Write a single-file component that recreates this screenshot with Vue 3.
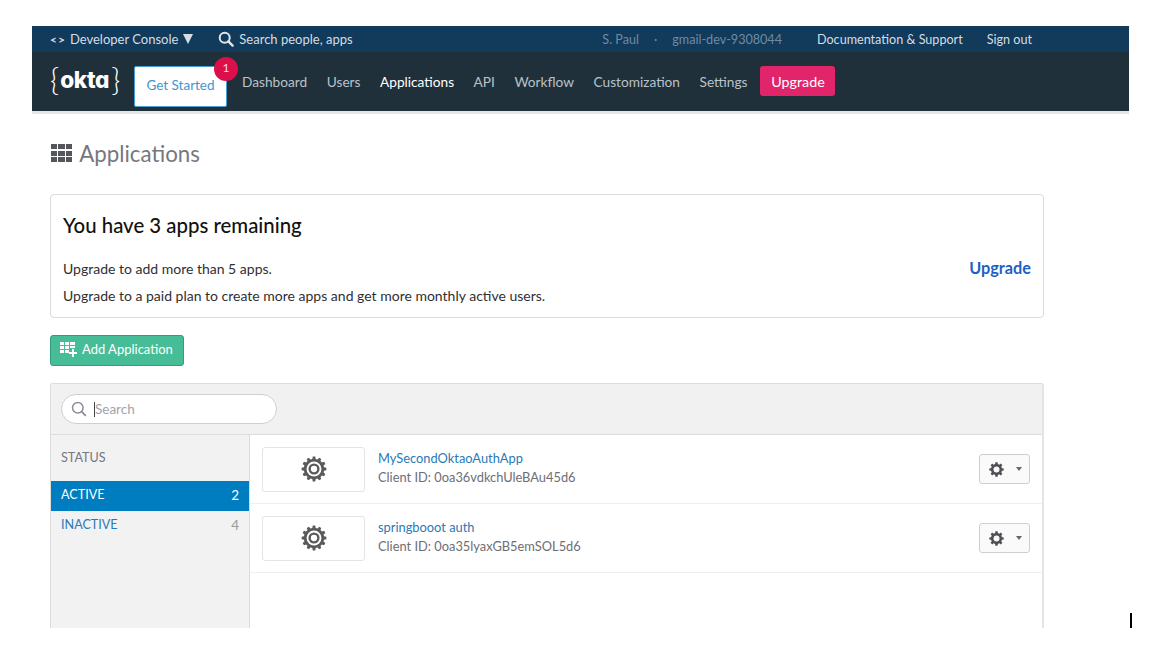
<template>
  <div class="screen">
    <div class="shot">
      <div class="topbar">
        <div class="top-left">
          <span class="code-mark">&lt;&gt;</span>
          <span>Developer Console</span>
          <span class="down-tri"></span>
          <svg class="top-search" viewBox="0 0 16 16" width="16" height="16">
            <circle cx="6.7" cy="6.7" r="5" fill="none" stroke="#dfe7ec" stroke-width="2" />
            <path d="M10.4 10.4 L14.6 14.6" stroke="#dfe7ec" stroke-width="2.4" stroke-linecap="round" />
          </svg>
          <span>Search people, apps</span>
        </div>
        <div class="top-right">
          <span class="dim">S. Paul</span>
          <span class="dim dot">·</span>
          <span class="dim org">gmail-dev-9308044</span>
          <span class="doc">Documentation &amp; Support</span>
          <span>Sign out</span>
        </div>
      </div>

      <div class="navbar">
        <div class="logo"><span class="brace">{</span><span class="okta">okta</span><span class="brace">}</span></div>
        <div class="started">
          Get Started
          <span class="badge">1</span>
        </div>
        <nav class="links">
          <a v-for="link in links" :key="link" :class="{ current: link === 'Applications' }">{{ link }}</a>
        </nav>
        <button class="upgrade-btn">Upgrade</button>
      </div>
      <div class="nav-rule"></div>

      <main class="content">
        <h1 class="title">
          <span class="grid-icon"><i v-for="n in 9" :key="n"></i></span>
          Applications
        </h1>

        <section class="notice">
          <h2>You have 3 apps remaining</h2>
          <div class="notice-row">
            <p>Upgrade to add more than 5 apps.</p>
            <a class="notice-link">Upgrade</a>
          </div>
          <p>Upgrade to a paid plan to create more apps and get more monthly active users.</p>
        </section>

        <button class="add-btn">
          <svg viewBox="0 0 17 16" width="17" height="16">
            <path fill="#fff" d="M0 1h4v3H0zM5 1h4v3H5zM10 1h5v3h-5zM0 5h4v3H0zM5 5h4v3H5zM10 5h5v2h-5zM0 9h4v3H0zM5 9h4v3H5z" />
            <path fill="#fff" d="M12 8h2v3h3v2h-3v3h-2v-3H9v-2h3z" />
          </svg>
          Add Application
        </button>

        <section class="panel">
          <div class="panel-search">
            <div class="search-box">
              <svg viewBox="0 0 16 16" width="16" height="16">
                <circle cx="6.8" cy="6.8" r="5.3" fill="none" stroke="#8c8c96" stroke-width="1.5" />
                <path d="M10.7 10.7 L14.8 14.8" stroke="#8c8c96" stroke-width="1.8" />
              </svg>
              <span class="caret"></span>
              <span class="placeholder">Search</span>
            </div>
          </div>
          <div class="panel-body">
            <aside class="side">
              <div class="side-head">STATUS</div>
              <div class="side-item active"><span>ACTIVE</span><span class="num">2</span></div>
              <div class="side-item"><span>INACTIVE</span><span class="num count">4</span></div>
            </aside>
            <div class="apps">
              <div v-for="app in apps" :key="app.name" class="app-row">
                <div class="app-logo">
                  <svg viewBox="0 0 28 28" width="26" height="26">
                    <path :d="bigGear" fill="#5a5a5a" />
                    <circle cx="14" cy="14" r="8" fill="#fff" />
                    <circle cx="14" cy="14" r="4.7" fill="none" stroke="#5a5a5a" stroke-width="2.6" />
                  </svg>
                </div>
                <div class="app-text">
                  <a>{{ app.name }}</a>
                  <div class="client">Client ID: {{ app.id }}</div>
                </div>
                <button class="gear-btn">
                  <svg viewBox="0 0 16 16" width="15" height="15">
                    <path :d="smallGear" fill="#4f4f55" fill-rule="evenodd" />
                  </svg>
                  <span class="caret-down"></span>
                </button>
              </div>
            </div>
          </div>
        </section>
      </main>
    </div>
    <span class="text-cursor"></span>
  </div>
</template>

<script setup>
const links = ['Dashboard', 'Users', 'Applications', 'API', 'Workflow', 'Customization', 'Settings']

const apps = [
  { name: 'MySecondOktaoAuthApp', id: '0oa36vdkchUleBAu45d6' },
  { name: 'springbooot auth', id: '0oa35lyaxGB5emSOL5d6' },
]

// toothed outline, optional hole is cut by the even-odd fill
function gear(c, outer, root, hole, teeth) {
  const step = (Math.PI * 2) / teeth
  const pts = []
  for (let i = 0; i < teeth; i++) {
    const a = i * step
    const w = step * 0.24
    ;[[a - w * 1.3, root], [a - w * 0.8, outer], [a + w * 0.8, outer], [a + w * 1.3, root]].forEach(([t, r]) => {
      pts.push(`${(c + r * Math.cos(t)).toFixed(2)} ${(c + r * Math.sin(t)).toFixed(2)}`)
    })
  }
  const ring = hole ? `M${c - hole} ${c}a${hole} ${hole} 0 1 0 ${hole * 2} 0a${hole} ${hole} 0 1 0 ${-hole * 2} 0z` : ''
  return `M${pts.join('L')}z${ring}`
}

const bigGear = gear(14, 13.4, 11, 0, 12)
const smallGear = gear(8, 7.8, 6, 3.2, 8)
</script>

<style>
body {
  background: #fff;
}
</style>

<style scoped>
.screen {
  position: relative;
  width: 1168px;
  height: 660px;
  padding: 26px 39px 0 32px;
  box-sizing: border-box;
  background: #fff;
  font-family: Lato, "Open Sans", Arial, sans-serif;
}

.shot {
  height: 602px;
  overflow: hidden;
}

.topbar {
  display: flex;
  justify-content: space-between;
  align-items: center;
  height: 26px;
  padding: 0 97px 0 18px;
  background: #123a5b;
  color: #d5dde3;
  font-size: 13px;
}

.top-left,
.top-right {
  display: flex;
  align-items: center;
}

.top-right {
  font-size: 12.6px;
}

.code-mark {
  margin-right: 4px;
  font-weight: 700;
  letter-spacing: 1px;
  font-size: 12px;
}

.down-tri {
  width: 0;
  height: 0;
  margin: 0 25px 0 5px;
  border-left: 5px solid transparent;
  border-right: 5px solid transparent;
  border-top: 10px solid #d5dde3;
}

.top-search {
  margin-right: 5px;
}

.dim {
  color: #6f8ba1;
}

.dot {
  margin: 0 15px;
}

.org {
  margin-right: 35px;
}

.doc {
  margin-right: 24px;
}

.navbar {
  display: flex;
  align-items: center;
  height: 59px;
  padding-left: 18px;
  background: #1f303b;
}

.logo {
  display: flex;
  align-items: center;
  width: 84px;
  color: #fff;
  margin-top: -4px;
}

.brace {
  font-size: 31px;
  font-weight: 300;
  line-height: 1;
}

.okta {
  margin: 0 2px 0 1px;
  font-family: Inter, Lato, sans-serif;
  font-feature-settings: "cv11";
  font-size: 22.6px;
  font-weight: 800;
  letter-spacing: -0.3px;
}

.started {
  position: relative;
  box-sizing: border-box;
  width: 93px;
  height: 41px;
  margin-top: 10px;
  line-height: 37px;
  text-align: center;
  background: #fff;
  border: 1px solid #4a9fd6;
  border-radius: 2px;
  color: #3f95cf;
  font-size: 13.5px;
}

.badge {
  position: absolute;
  top: -10px;
  right: -12px;
  width: 24px;
  height: 24px;
  line-height: 22px;
  border-radius: 50%;
  background: #dc0f4b;
  color: #f6dce4;
  font-size: 12px;
}

.links {
  display: flex;
  gap: 19.5px;
  margin-left: 15px;
  margin-top: -1px;
  color: #b9c2c9;
  font-size: 13.7px;
}

.current {
  color: #fff;
}

.upgrade-btn {
  height: 30px;
  width: 75px;
  margin-left: 13px;
  margin-top: -1px;
  border: none;
  border-radius: 3px;
  background: #e2246a;
  color: #fff;
  font: inherit;
  font-size: 14.3px;
}

.nav-rule {
  height: 3px;
  background: #e6e6e6;
}

.content {
  width: 994px;
  margin-left: 18px;
}

.title {
  display: flex;
  align-items: center;
  gap: 7px;
  height: 28px;
  margin: 25px 0 27px 1px;
  color: #77777f;
  font-size: 22.3px;
  font-weight: 400;
}

.grid-icon {
  display: grid;
  grid-template-columns: repeat(3, 6.4px);
  grid-auto-rows: 5px;
  gap: 1.5px 1px;
}

.grid-icon i {
  background: #55555c;
}

.notice {
  box-sizing: border-box;
  height: 124px;
  padding: 18px 12px 0;
  border: 1px solid #dcdcdc;
  border-radius: 4px;
}

.notice h2 {
  margin: 0 0 23px;
  color: #111;
  font-size: 20.4px;
  font-weight: 500;
  line-height: 24px;
}

.notice p {
  margin: 0 0 9px;
  color: #2f2f33;
  font-size: 14px;
  line-height: 18px;
}

.notice-row {
  display: flex;
  justify-content: space-between;
}

.notice-link {
  margin-top: -1px;
  color: #1f5fc4;
  font-size: 16.3px;
  font-weight: 700;
  line-height: 18px;
}

.add-btn {
  display: flex;
  align-items: center;
  gap: 5px;
  box-sizing: border-box;
  width: 134px;
  height: 31px;
  margin-top: 17px;
  padding: 0 0 3px 9px;
  background: #46bd97;
  border: 1px solid #2e9e7c;
  border-radius: 3px;
  color: #fff;
  font: inherit;
  font-size: 13px;
}

.panel {
  margin-top: 17px;
  border: 1px solid #dcdcdc;
  border-right: 2px solid #e4e4e4;
  border-bottom: none;
  border-radius: 3px 3px 0 0;
}

.panel-search {
  box-sizing: border-box;
  height: 51px;
  padding: 10px;
  background: #f1f1f1;
  border-bottom: 1px solid #dcdcdc;
}

.search-box {
  display: flex;
  align-items: center;
  box-sizing: border-box;
  width: 216px;
  height: 30px;
  padding-left: 9px;
  background: #fff;
  border: 1px solid #cfcfcf;
  border-radius: 15px;
}

.caret {
  width: 1px;
  height: 15px;
  margin-left: 7px;
  background: #444;
}

.placeholder {
  color: #a3a3a8;
  font-size: 13.5px;
}

.panel-body {
  display: flex;
  height: 200px;
}

.side {
  width: 198px;
  background: #f2f2f2;
  border-right: 1px solid #dcdcdc;
}

.side-head {
  height: 46px;
  padding: 15px 10px 0;
  box-sizing: border-box;
  color: #77777d;
  font-size: 12.6px;
}

.side-item {
  display: flex;
  justify-content: space-between;
  box-sizing: border-box;
  height: 30px;
  padding: 0 10px;
  line-height: 28px;
  color: #2a7ab5;
  font-size: 12.6px;
}

.side-item .num {
  font-size: 13.5px;
}

.side-item.active {
  background: #007cc0;
  color: #fff;
}

.count {
  color: #9a9a9a;
}

.apps {
  flex: 1;
  background: #fff;
}

.app-row {
  display: flex;
  align-items: center;
  box-sizing: border-box;
  height: 69px;
  padding: 0 12px 0 12px;
  border-bottom: 1px solid #efefef;
}

.app-logo {
  display: flex;
  align-items: center;
  justify-content: center;
  box-sizing: border-box;
  width: 103px;
  height: 45px;
  margin-right: 13px;
  border: 1px solid #e4e4e4;
  border-radius: 3px;
}

.app-text {
  flex: 1;
  margin-top: -2px;
  font-size: 12.85px;
  line-height: 19px;
}

.app-text a {
  color: #2a7ab5;
}

.client {
  color: #6e6e74;
}

.gear-btn {
  display: flex;
  align-items: center;
  gap: 12px;
  box-sizing: border-box;
  width: 51px;
  height: 30px;
  padding: 0 0 0 9px;
  background: #fafafa;
  border: 1px solid #cfcfcf;
  border-radius: 3px;
}

.caret-down {
  width: 0;
  height: 0;
  border-left: 3.5px solid transparent;
  border-right: 3.5px solid transparent;
  border-top: 4px solid #66666c;
}

.text-cursor {
  position: absolute;
  left: 1130px;
  top: 613px;
  width: 2px;
  height: 15px;
  background: #000;
}
</style>
